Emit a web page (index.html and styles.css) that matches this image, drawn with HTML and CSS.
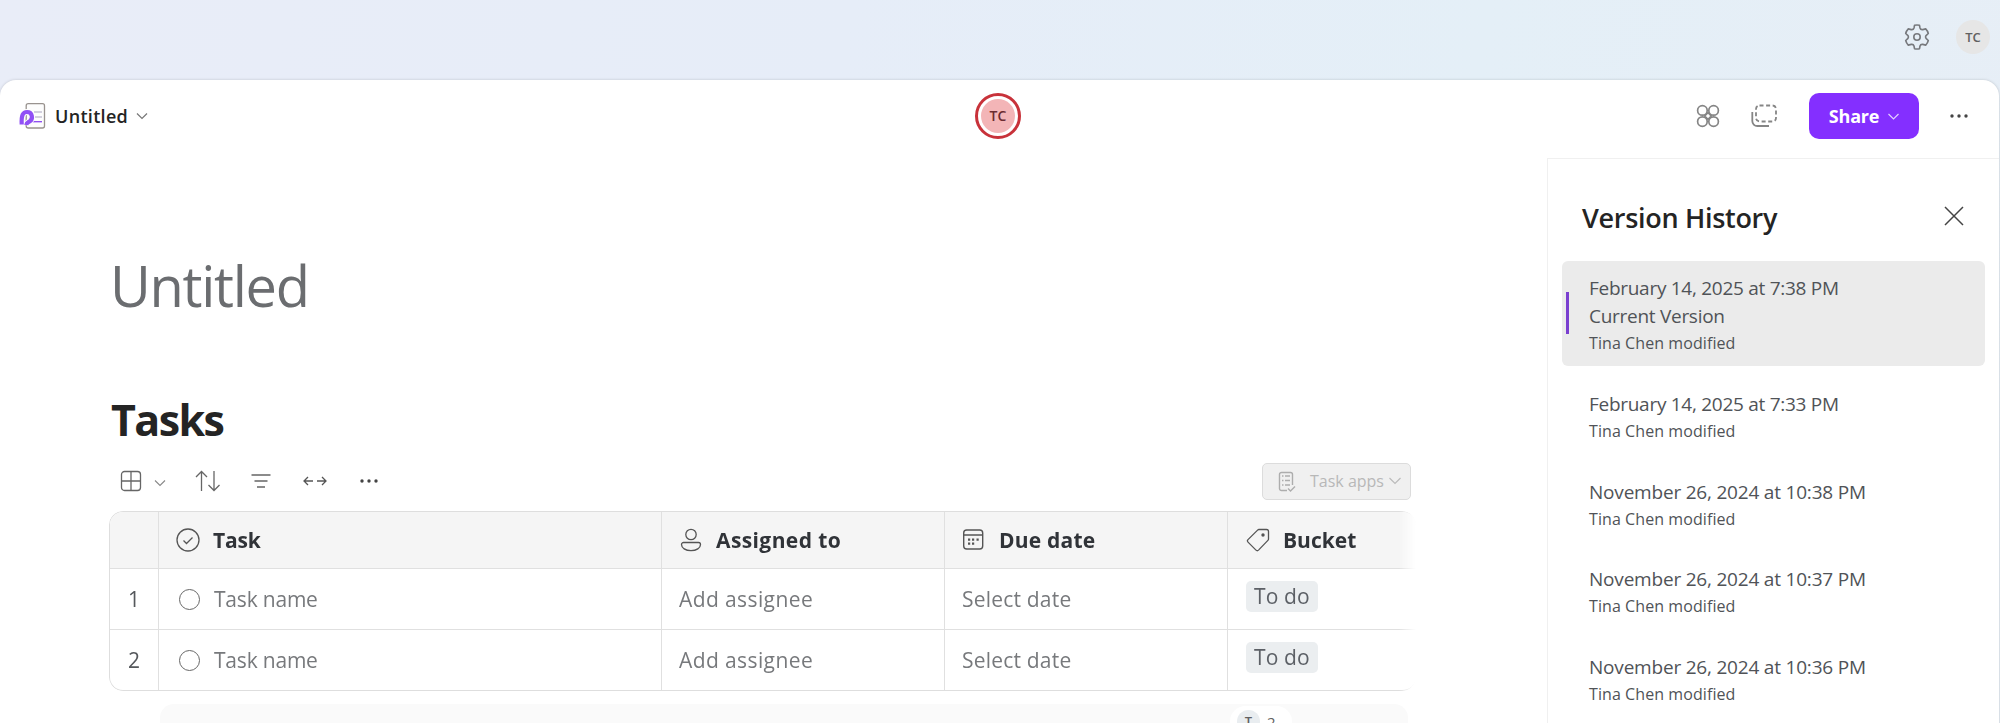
FILE: index.html
```html
<!DOCTYPE html>
<html lang="en">
<head>
    <meta charset="UTF-8">
    <meta name="viewport" content="width=device-width, initial-scale=1.0">
    <title>Untitled</title>
    <link rel="stylesheet" href="styles.css">
</head>
<body>
    <div class="topbar">
        <svg class="gear" width="26" height="26" viewBox="0 0 26 26" fill="none" stroke="#77797d" stroke-width="1.6" stroke-linejoin="round">
            <path d="M10.5 1.3Q13 .7 15.5 1.3L16 4Q16.6 6 18.8 5.600L21.700 4.900Q23.600 6.800 24.300 9.500L22.300 11.300Q20.900 13 22.300 14.700L24.300 16.500Q23.600 19.200 21.700 21.100L18.800 20.400Q16.600 20 16 22L15.500 24.700Q13 25.300 10.500 24.700L10 22Q9.400 20 7.200 20.400L4.300 21.100Q2.400 19.200 1.700 16.500L3.700 14.700Q5.100 13 3.700 11.300L1.700 9.500Q2.400 6.800 4.300 4.900L7.200 5.600Q9.400 6 10 4z"/>
            <circle cx="13" cy="13" r="3.2"/>
        </svg>
        <span class="avatar">TC</span>
    </div>

    <div class="app">
        <header class="header">
            <div class="doc-name">
                <svg width="28" height="28" viewBox="0 0 28 28" fill="none">
                    <rect x="8.200" y="1.700" width="18.300" height="24.300" rx="2" fill="#fdfdfd" stroke="#99938f" stroke-width="1.300"/>
                    <path d="M16 10h8M17 15h7" stroke="#a9a3c0" stroke-width="1.200"/>
                    <path d="M15 19.700h9" stroke="#8b45f0" stroke-width="1.300"/>
                    <path d="M3.700 22.500C3.700 13 5 10 9 10c5.500 0 6.500 7 2.500 9.500-2 1.200-3 1.500-3.500 3.500" stroke="#fdfdfd" stroke-width="6"/>
                    <path d="M3.700 22.500C3.200 13 5 10 9 10c5.500 0 6.500 7 2.500 9.500-2 1.200-3 1.500-3.300 3.500" stroke="#9150f5" stroke-width="4.200"/>
                </svg>
                <span class="doc-title">Untitled</span>
                <svg width="12" height="8" viewBox="0 0 12 8" fill="none" stroke="#777" stroke-width="1.200"><path d="M1 1.500l5 5 5-5"/></svg>
            </div>
            <div class="presence"><span>TC</span></div>
            <div class="header-actions">
                <svg width="24" height="24" viewBox="0 0 24 24" fill="none" stroke="#858585" stroke-width="1.700">
                    <circle cx="6.400" cy="6.400" r="4.800"/><circle cx="17.600" cy="6.400" r="4.800"/>
                    <circle cx="6.400" cy="17.600" r="4.800"/><circle cx="17.600" cy="17.600" r="4.800"/>
                    <path d="M12 8.700l3.300 3.300-3.300 3.300L8.700 12z"/>
                </svg>
                <svg class="copy-icon" width="26" height="24" viewBox="0 0 26 24" fill="none" stroke="#858585" stroke-width="1.800">
                    <rect x="5" y="1.500" width="20" height="16" rx="3.500" stroke-dasharray="4 2.600"/>
                    <path d="M1.300 8v9a5 5 0 0 0 5 5H18"/>
                </svg>
                <button class="share">Share
                    <svg width="11" height="7" viewBox="0 0 11 7" fill="none" stroke="#e3cfff" stroke-width="1.200"><path d="M.5 1l5 5 5-5"/></svg>
                </button>
                <svg width="20" height="6" viewBox="0 0 20 6" fill="#444"><circle cx="3" cy="3" r="1.700"/><circle cx="10" cy="3" r="1.700"/><circle cx="17" cy="3" r="1.700"/></svg>
            </div>
        </header>

        <div class="main">
            <main class="page">
                <h1>Untitled</h1>
                <h2>Tasks</h2>
                <div class="toolbar">
                    <svg class="tool-grid" width="22" height="22" viewBox="0 0 22 22" fill="none" stroke="#666" stroke-width="1.300">
                        <rect x="1.500" y="1.500" width="19" height="19" rx="3"/><path d="M11 1.500v19M1.500 11h19"/>
                    </svg>
                    <svg class="tool-down" width="12" height="8" viewBox="0 0 12 8" fill="none" stroke="#888" stroke-width="1.100"><path d="M1 1.500l5 5 5-5"/></svg>
                    <svg class="tool-sort" width="26" height="22" viewBox="0 0 26 22" fill="none" stroke="#666" stroke-width="1.300">
                        <path d="M6.500 21V1.500M1 7l5.500-5.500L12 7M19 1v19.500M13.500 15l5.500 5.500 5.500-5.500"/>
                    </svg>
                    <svg class="tool-filter" width="20" height="14" viewBox="0 0 20 14" fill="none" stroke="#666" stroke-width="1.300">
                        <path d="M.5 1h19M3.500 7h13M6 13h8"/>
                    </svg>
                    <svg class="tool-width" width="24" height="10" viewBox="0 0 24 10" fill="none" stroke="#555" stroke-width="1.300">
                        <path d="M10 5H1.500M5 1L1 5l4 4M14 5h8.500M19 1l4 4-4 4"/>
                    </svg>
                    <svg class="tool-more" width="20" height="6" viewBox="0 0 20 6" fill="#444"><circle cx="3" cy="3" r="1.700"/><circle cx="10" cy="3" r="1.700"/><circle cx="17" cy="3" r="1.700"/></svg>
                    <button class="task-apps" disabled>
                        <svg width="18" height="21" viewBox="0 0 18 21" fill="none" stroke="#adadad" stroke-width="1.400">
                            <path d="M9 19.500H3.500a2 2 0 0 1-2-2v-14a2 2 0 0 1 2-2h9a2 2 0 0 1 2 2V14M4 5h1.500M7 5h5M4 9.500h1.500M7 9.500h5M4 14h1.500M7 14h5M10 17.500l2.500 2.500 4.500-4.500"/>
                        </svg>
                        <span>Task apps</span>
                        <svg width="12" height="8" viewBox="0 0 12 8" fill="none" stroke="#bbb" stroke-width="1.200"><path d="M.5 1l5.500 5.500L11.500 1"/></svg>
                    </button>
                </div>

                <div class="table">
                    <div class="row head">
                        <div class="cell"></div>
                        <div class="cell">
                            <svg width="24" height="24" viewBox="0 0 24 24" fill="none" stroke="#555" stroke-width="1.300"><circle cx="12" cy="12" r="11"/><path d="M7.500 12.500l3 3 6-6"/></svg>
                            <span>Task</span>
                        </div>
                        <div class="cell assignee">
                            <svg width="24" height="24" viewBox="0 0 24 24" fill="none" stroke="#555" stroke-width="1.300"><circle cx="12" cy="6.500" r="5.200"/><path d="M4.500 14.500h15a2 2 0 0 1 2 2c0 3.500-4 6.200-9.500 6.200s-9.500-2.700-9.500-6.200a2 2 0 0 1 2-2z"/></svg>
                            <span>Assigned to</span>
                        </div>
                        <div class="cell due">
                            <svg width="24" height="24" viewBox="0 0 24 24" fill="none" stroke="#555" stroke-width="1.400"><rect x="1.700" y="2" width="19" height="19" rx="3"/><path d="M1.700 7h19"/><path d="M6 11.700h2.200M10 11.700h2.200M14.500 11.700h2.200M6 15.700h2.200M10 15.700h2.200" stroke-width="2.200"/></svg>
                            <span>Due date</span>
                        </div>
                        <div class="cell">
                            <svg width="24" height="24" viewBox="0 0 24 24" fill="none" stroke="#555" stroke-width="1.300" stroke-linejoin="round"><path d="M13 1.500h7.500a2 2 0 0 1 2 2V11a2 2 0 0 1-.6 1.400l-9.400 9.700a1.800 1.800 0 0 1-2.500 0l-8-8a1.800 1.800 0 0 1 0-2.500L11.600 2.100A2 2 0 0 1 13 1.500z"/><circle cx="17" cy="7" r="1.700" fill="#555" stroke="none"/></svg>
                            <span>Bucket</span>
                        </div>
                    </div>
                    <div class="row">
                        <div class="cell num">1</div>
                        <div class="cell"><i class="circle"></i><span>Task name</span></div>
                        <div class="cell assignee"><span>Add assignee</span></div>
                        <div class="cell due"><span>Select date</span></div>
                        <div class="cell"><span class="tag">To do</span></div>
                    </div>
                    <div class="row">
                        <div class="cell num">2</div>
                        <div class="cell"><i class="circle"></i><span>Task name</span></div>
                        <div class="cell assignee"><span>Add assignee</span></div>
                        <div class="cell due"><span>Select date</span></div>
                        <div class="cell"><span class="tag">To do</span></div>
                    </div>
                </div>
                <div class="summary">
                    <div class="count"><span class="count-dot">T</span><span>2</span></div>
                </div>
            </main>

            <aside class="history">
                <div class="history-head">
                    <h3>Version History</h3>
                    <svg width="20" height="20" viewBox="0 0 20 20" fill="none" stroke="#444" stroke-width="1.500"><path d="M1 1l18 18M19 1L1 19"/></svg>
                </div>
                <div class="version current">
                    <p class="date feb">February 14, 2025 at 7:38 PM</p>
                    <p class="date feb">Current Version</p>
                    <p class="author">Tina Chen modified</p>
                </div>
                <div class="version">
                    <p class="date feb">February 14, 2025 at 7:33 PM</p>
                    <p class="author">Tina Chen modified</p>
                </div>
                <div class="version">
                    <p class="date">November 26, 2024 at 10:38 PM</p>
                    <p class="author">Tina Chen modified</p>
                </div>
                <div class="version">
                    <p class="date">November 26, 2024 at 10:37 PM</p>
                    <p class="author">Tina Chen modified</p>
                </div>
                <div class="version">
                    <p class="date">November 26, 2024 at 10:36 PM</p>
                    <p class="author">Tina Chen modified</p>
                </div>
            </aside>
        </div>
    </div>
</body>
</html>
```
FILE: styles.css
```css
* {
    box-sizing: border-box;
}
body {
    margin: 0;
    height: 723px;
    overflow: hidden;
    font-family: "Open Sans", "Noto Sans", sans-serif;
    color: #242424;
    background: linear-gradient(100deg, #e9edf8 0%, #e6edf8 40%, #e4eff7 70%, #e7eef6 100%);
}
svg {
    display: block;
    flex: none;
}
h1, h2, h3, p {
    margin: 0;
}
button {
    font-family: inherit;
}
.topbar {
    height: 80px;
    display: flex;
    justify-content: flex-end;
    align-items: flex-start;
    padding: 20px 10px 0 0;
    gap: 26px;
}
.gear {
    margin-top: 4px;
}
.avatar {
    width: 34px;
    height: 34px;
    border-radius: 50%;
    background: #e6e6e6;
    color: #616161;
    font-size: 13px;
    font-weight: 600;
    line-height: 35px;
    text-align: center;
}
.app {
    width: 1999px;
    height: 660px;
    background: #fff;
    border-radius: 16px 16px 0 0;
    box-shadow: 0 0 3px rgba(0, 0, 0, 0.18);
}
.header {
    height: 78px;
    display: grid;
    grid-template-columns: 957px 46px 1fr;
    padding: 0 30px 0 18px;
}
.doc-name {
    display: flex;
    align-items: center;
    height: 72px;
}
.doc-title {
    width: 73px;
    margin: 0 8px 0 9px;
    font-size: 18px;
    font-weight: 600;
    letter-spacing: 0.3px;
    white-space: nowrap;
}
.presence {
    width: 46px;
    height: 46px;
    margin-top: 13px;
    padding: 3px;
    border: 3px solid #c8323a;
    border-radius: 50%;
}
.presence span {
    display: block;
    height: 100%;
    border-radius: 50%;
    background: #f3b5b7;
    color: #6b2b2f;
    font-size: 14px;
    font-weight: 600;
    line-height: 34px;
    text-align: center;
}
.header-actions {
    display: flex;
    align-items: center;
    justify-content: flex-end;
    height: 72px;
}
.copy-icon {
    margin: 0 32px 0 31px;
}
.share {
    display: flex;
    align-items: center;
    justify-content: center;
    gap: 9px;
    width: 110px;
    height: 46px;
    margin-right: 30px;
    padding: 0;
    border: 0;
    border-radius: 10px;
    background: #842fff;
    color: #fff;
    font-size: 18px;
    font-weight: 700;
    letter-spacing: -0.2px;
}
.main {
    display: flex;
    height: 582px;
}
.page {
    width: 1547px;
    padding-left: 109px;
}
h1 {
    margin: 85px 0 0 1px;
    color: #6b6d70;
    font-size: 56px;
    font-weight: 400;
    line-height: 84px;
    letter-spacing: -1.3px;
}
h2 {
    margin: 61px 0 0 2px;
    font-size: 43px;
    font-weight: 700;
    line-height: 64px;
    letter-spacing: -1.6px;
}
.toolbar {
    display: flex;
    align-items: center;
    width: 1302px;
    height: 38px;
    margin-top: 10px;
}
.tool-grid { margin-left: 11px; }
.tool-down { margin: 4px 0 0 12px; }
.tool-sort { margin-left: 29px; }
.tool-filter { margin-left: 30px; }
.tool-width { margin-left: 32px; }
.tool-more { margin-left: 32px; }
.task-apps {
    display: flex;
    align-items: center;
    width: 149px;
    height: 37px;
    margin-left: auto;
    padding: 0 9px 0 15px;
    border: 1px solid #dcdcdc;
    border-radius: 5px;
    background: #f0f0f0;
    color: #b8b8b8;
    font-size: 16px;
}
.task-apps span {
    margin: 0 auto 0 14px;
    white-space: nowrap;
}
.table {
    width: 1307px;
    height: 180px;
    margin-top: 11px;
    border: 1px solid #dedede;
    border-right: 0;
    border-radius: 14px;
    overflow: hidden;
    -webkit-mask-image: linear-gradient(to right, #000 1290px, transparent 1307px);
    mask-image: linear-gradient(to right, #000 1290px, transparent 1307px);
}
.row {
    display: grid;
    grid-template-columns: 49px 503px 283px 283px 1fr;
    height: 61px;
}
.row:last-child {
    height: 60px;
}
.row.head {
    height: 57px;
    background: #f5f5f5;
    font-weight: 700;
}
.cell {
    display: flex;
    align-items: center;
    padding-left: 17px;
    border-right: 1px solid #e0e0e0;
    border-bottom: 1px solid #e0e0e0;
    color: #77797c;
    font-size: 21px;
    letter-spacing: -0.2px;
    white-space: nowrap;
}
.assignee {
    letter-spacing: 0.4px;
}
.due {
    letter-spacing: 0.2px;
}
.head .cell {
    color: #303338;
}
.head svg {
    margin-right: 13px;
}
.row:last-child .cell {
    border-bottom: 0;
}
.cell:last-child {
    padding-left: 18px;
    border-right: 0;
}
.head .cell:last-child {
    letter-spacing: 0;
}
.cell.num {
    justify-content: center;
    padding: 0;
    color: #55585c;
}
.circle {
    width: 21px;
    height: 21px;
    margin: 0 14px 0 3px;
    border: 1.500px solid #666;
    border-radius: 50%;
}
.tag {
    height: 31px;
    margin-bottom: 6px;
    padding: 0 8px;
    border-radius: 5px;
    background: #ebeef0;
    color: #5c6066;
    letter-spacing: 0.1px;
    line-height: 31px;
}
.summary {
    width: 1248px;
    height: 40px;
    margin: 13px 0 0 51px;
    padding: 2px 0 0 1070px;
    border-radius: 14px;
    background: #fafafa;
}
.count {
    display: flex;
    align-items: center;
    gap: 7px;
    width: 62px;
    height: 31px;
    padding-left: 7px;
    border-radius: 16px;
    background: #fff;
    color: #616161;
    font-size: 15px;
}
.count-dot {
    width: 23px;
    height: 23px;
    border-radius: 50%;
    background: #e9edf0;
    font-size: 13px;
    font-weight: 600;
    line-height: 23px;
    text-align: center;
}
.history {
    width: 452px;
    padding: 0 14px;
    border: 1px solid #f0f0f0;
    border-width: 1px 0 0 1px;
}
.history-head {
    display: flex;
    justify-content: space-between;
    padding: 37px 21px 0 20px;
    height: 102px;
}
.history-head svg {
    margin-top: 10px;
}
h3 {
    font-size: 27px;
    font-weight: 600;
    line-height: 44px;
    letter-spacing: -0.3px;
    white-space: nowrap;
}
.version {
    height: 87.500px;
    padding: 13px 0 0 27px;
    color: #505357;
    white-space: nowrap;
}
.version.current {
    position: relative;
    height: 105px;
    margin-bottom: 11px;
    border-radius: 6px;
    background: #ebebeb;
}
.current::before {
    content: "";
    position: absolute;
    left: 4px;
    top: 31px;
    width: 3px;
    height: 42px;
    background: #7a3fd0;
}
.date {
    font-size: 19px;
    line-height: 28px;
    letter-spacing: -0.2px;
}
.date.feb {
    letter-spacing: -0.28px;
}
.author {
    font-size: 16px;
    line-height: 26px;
    letter-spacing: 0.08px;
}
```
